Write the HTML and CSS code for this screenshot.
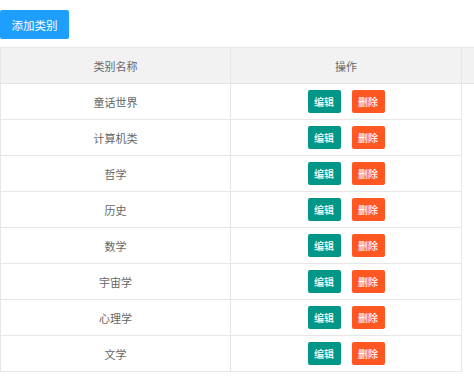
FILE: index.html
```html
<!DOCTYPE html>
<html lang="zh-CN">
<head>
    <meta charset="UTF-8">
    <meta name="viewport" content="width=device-width, initial-scale=1.0">
    <title>类别管理</title>
    <link rel="stylesheet" href="styles.css">
</head>
<body>
    <button class="btn btn-add">添加类别</button>

    <table class="cate-table">
        <colgroup>
            <col class="col-name">
            <col class="col-op">
            <col class="col-patch">
        </colgroup>
        <thead>
            <tr>
                <th>类别名称</th>
                <th>操作</th>
                <th class="patch"></th>
            </tr>
        </thead>
        <tbody>
            <tr><td>童话世界</td><td><button class="btn btn-xs btn-edit">编辑</button><button class="btn btn-xs btn-del">删除</button></td></tr>
            <tr><td>计算机类</td><td><button class="btn btn-xs btn-edit">编辑</button><button class="btn btn-xs btn-del">删除</button></td></tr>
            <tr><td>哲学</td><td><button class="btn btn-xs btn-edit">编辑</button><button class="btn btn-xs btn-del">删除</button></td></tr>
            <tr><td>历史</td><td><button class="btn btn-xs btn-edit">编辑</button><button class="btn btn-xs btn-del">删除</button></td></tr>
            <tr><td>数学</td><td><button class="btn btn-xs btn-edit">编辑</button><button class="btn btn-xs btn-del">删除</button></td></tr>
            <tr><td>宇宙学</td><td><button class="btn btn-xs btn-edit">编辑</button><button class="btn btn-xs btn-del">删除</button></td></tr>
            <tr><td>心理学</td><td><button class="btn btn-xs btn-edit">编辑</button><button class="btn btn-xs btn-del">删除</button></td></tr>
            <tr><td>文学</td><td><button class="btn btn-xs btn-edit">编辑</button><button class="btn btn-xs btn-del">删除</button></td></tr>
        </tbody>
    </table>
</body>
</html>
```

FILE: styles.css
```css
body {
    margin: 0;
    padding-top: 10px;
    font-family: "Noto Sans CJK SC", "Liberation Sans", sans-serif;
    color: #666;
    background: #fff;
}
.btn {
    display: inline-block;
    border: none;
    border-radius: 2px;
    color: #fff;
    font-family: inherit;
    cursor: pointer;
    padding: 0;
}
.btn-add {
    height: 29px;
    width: 69px;
    font-size: 11.5px;
    background-color: #1E9FFF;
    display: block;
}
.btn-xs {
    height: 23px;
    width: 33px;
    font-size: 10px;
    line-height: 23px;
    font-weight: 500;
}
.btn-edit {
    background-color: #009688;
}
.btn-del {
    background-color: #FF5722;
    margin-left: 11px;
}
.cate-table {
    margin-top: 8px;
    border-collapse: collapse;
    table-layout: fixed;
    width: 474px;
    font-size: 11px;
}
.col-name {
    width: 230px;
}
.col-op {
    width: 231px;
}
.col-patch {
    width: 13px;
}
th, td {
    border: 1px solid #e6e6e6;
    height: 35px;
    padding: 0;
    text-align: center;
    font-weight: normal;
}
th {
    background-color: #f2f2f2;
}
th.patch {
    border-right: none;
}
td .btn {
    vertical-align: middle;
}
```
